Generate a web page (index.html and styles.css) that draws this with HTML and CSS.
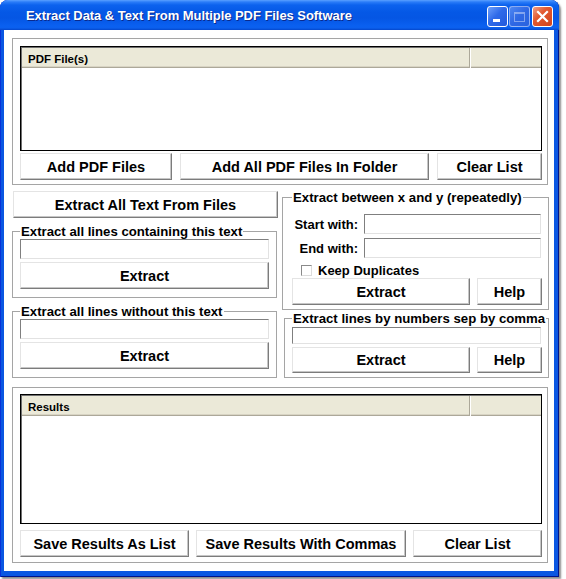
FILE: index.html
```html
<!DOCTYPE html>
<html lang="en">
<head>
<meta charset="utf-8">
<title>Extract Data &amp; Text From Multiple PDF Files Software</title>
<link rel="stylesheet" href="styles.css">
</head>
<body>
<div class="window">
  <div class="titlebar">
    <div class="title">Extract Data &amp; Text From Multiple PDF Files Software</div>
    <div class="tb-buttons">
      <span class="tb-btn tb-min"><span class="min-bar"></span></span>
      <span class="tb-btn tb-max"><span class="max-box"></span></span>
      <span class="tb-btn tb-close"><svg class="close-x" width="13" height="13" viewBox="0 0 13 13"><path d="M2 2 L11 11 M11 2 L2 11" stroke="#fff" stroke-width="2.2" stroke-linecap="square" fill="none"/></svg></span>
    </div>
  </div>
  <div class="client">
    <div class="panel panel-files">
      <div class="listview list-files">
        <div class="lv-header">
          <div class="lv-col lv-col1">PDF File(s)</div>
          <div class="lv-col lv-col2"></div>
        </div>
        <div class="lv-body"></div>
      </div>
      <div class="btn-row row-files">
        <button class="btn btn-addfiles">Add PDF Files</button>
        <button class="btn btn-addfolder">Add All PDF Files In Folder</button>
        <button class="btn btn-clear1">Clear List</button>
      </div>
    </div>

    <div class="middle">
      <div class="col-left">
        <button class="btn btn-all">Extract All Text From Files</button>
        <fieldset class="group group-left group-first">
          <legend>Extract all lines containing this text</legend>
          <div class="field field-wide"></div>
          <button class="btn btn-full">Extract</button>
        </fieldset>
        <fieldset class="group group-left group-second">
          <legend>Extract all lines without this text</legend>
          <div class="field field-wide"></div>
          <button class="btn btn-full">Extract</button>
        </fieldset>
      </div>
      <div class="col-right">
        <fieldset class="group group-between">
          <legend>Extract between x and y (repeatedly)</legend>
          <div class="form-row">
            <span class="lbl">Start with:</span>
            <div class="field field-short"></div>
          </div>
          <div class="form-row form-row-2">
            <span class="lbl">End with:</span>
            <div class="field field-short"></div>
          </div>
          <div class="check-row">
            <span class="checkbox"></span>
            <span class="check-label">Keep Duplicates</span>
          </div>
          <div class="btn-pair">
            <button class="btn btn-extract">Extract</button>
            <button class="btn btn-help">Help</button>
          </div>
        </fieldset>
        <fieldset class="group group-numbers">
          <legend>Extract lines by numbers sep by comma</legend>
          <div class="field field-num"></div>
          <div class="btn-pair btn-pair-num">
            <button class="btn btn-extract">Extract</button>
            <button class="btn btn-help">Help</button>
          </div>
        </fieldset>
      </div>
    </div>

    <div class="panel panel-results">
      <div class="listview list-results">
        <div class="lv-header">
          <div class="lv-col lv-col1">Results</div>
          <div class="lv-col lv-col2"></div>
        </div>
        <div class="lv-body"></div>
      </div>
      <div class="btn-row row-results">
        <button class="btn btn-savelist">Save Results As List</button>
        <button class="btn btn-savecommas">Save Results With Commas</button>
        <button class="btn btn-clear2">Clear List</button>
      </div>
    </div>
  </div>
</div>
</body>
</html>
```

FILE: styles.css
```css
* { box-sizing: border-box; }

html, body {
  margin: 0;
  padding: 0;
  background: #ffffff;
}

body {
  width: 566px;
  height: 579px;
  overflow: hidden;
  font-family: "Liberation Sans", Arial, sans-serif;
  font-weight: bold;
  color: #000;
}

.window {
  width: 559px;
  height: 577px;
  display: flex;
  flex-direction: column;
  background: #0a57e2;
  border-radius: 8px 8px 0 0;
  box-shadow: inset 1px 0 0 #0831d9, inset -1px 0 0 #00138c, inset 0 -1px 0 #00138c,
              2px 2px 2px rgba(0, 0, 0, 0.45);
}

/* ---------- title bar ---------- */
.titlebar {
  height: 30px;
  flex: none;
  display: flex;
  align-items: flex-start;
  padding: 0 6px 0 26px;
  border-radius: 8px 8px 0 0;
  background: linear-gradient(to bottom,
    #5aa0ff 0px, #2a7cf8 2px, #0c62ee 5px, #0558e6 12px,
    #0556e4 60%, #0a60f0 86%, #0b60ee 93%, #0447cc 100%);
}

.title {
  flex: 1;
  margin-top: 8px;
  font-size: 13px;
  line-height: 15px;
  letter-spacing: -0.05px;
  color: #ffffff;
  text-shadow: 1px 1px 0 #0b2a8c;
  white-space: nowrap;
}

.tb-buttons {
  display: flex;
  margin-top: 6px;
}

.tb-btn {
  width: 21px;
  height: 21px;
  border-radius: 3px;
  border: 1px solid #ffffff;
  position: relative;
  display: flex;
  align-items: center;
  justify-content: center;
}

.tb-min {
  background: linear-gradient(135deg, #6ea0fb 0%, #2f6ae9 45%, #2259dc 100%);
}

.min-bar {
  position: absolute;
  left: 5px;
  bottom: 4px;
  width: 7px;
  height: 3px;
  background: #ffffff;
}

.tb-max {
  margin-left: 1px;
  border-color: rgba(255, 255, 255, 0.45);
  background: linear-gradient(135deg, #4f88f2 0%, #2f68e4 50%, #2a63df 100%);
}

.max-box {
  width: 11px;
  height: 10px;
  border: 1px solid rgba(255, 255, 255, 0.4);
  border-top-width: 2px;
}

.tb-close {
  margin-left: 2px;
  background: linear-gradient(135deg, #f0a088 0%, #e2582f 40%, #d2431c 100%);
}

/* ---------- client area ---------- */
.client {
  flex: 1;
  margin: 0 5px 6px 4px;
  padding: 8px 6px 0 8px;
  background: #ffffff;
  display: flex;
  flex-direction: column;
}

.panel {
  border: 1px solid #a5a5a5;
  flex: none;
}

.panel-files {
  padding: 7px 5px 4px 7px;
}

.panel-results {
  margin-top: 9px;
  padding: 6px 5px 5px 7px;
}

/* ---------- list views ---------- */
.listview {
  border: 1px solid #000000;
  padding: 1px 0 0 1px;
  background: #ffffff;
  box-shadow: inset 1px 1px 0 #6f6f6f;
  display: flex;
  flex-direction: column;
}

.list-files { height: 105px; }
.list-results { height: 130px; }

.lv-header {
  height: 20px;
  flex: none;
  display: flex;
  background: #ebe9d8;
  box-shadow: inset 0 -1px 0 #aca899, inset 0 -2px 0 #d8d4c4;
}

.lv-col {
  font-size: 11.5px;
  line-height: 14px;
  padding: 4px 0 0 6px;
  white-space: nowrap;
}

.lv-col1 {
  width: 448px;
  border-right: 1px solid #aca899;
}

.lv-col2 {
  flex: 1;
  border-left: 1px solid #ffffff;
}

.lv-body { flex: 1; }

/* ---------- buttons ---------- */
.btn {
  display: block;
  height: 27px;
  margin: 0;
  padding: 0;
  font-family: "Liberation Sans", Arial, sans-serif;
  font-weight: bold;
  font-size: 14.5px;
  color: #000;
  background: #ffffff;
  border: 1px solid;
  border-color: #e4e4e4 #7c7c7c #7c7c7c #e4e4e4;
  box-shadow: inset -1px -1px 0 #c6c6c6;
  white-space: nowrap;
  flex: none;
}

.btn-row {
  display: flex;
}

.row-files {
  margin-top: 2px;
  gap: 8px;
}

.btn-addfiles { width: 152px; }
.btn-addfolder { width: 249px; }
.btn-clear1 { width: 105px; }

.row-results {
  margin-top: 6px;
  gap: 7px;
}

.btn-savelist { width: 169px; }
.btn-savecommas { width: 210px; }
.btn-clear2 { width: 129px; }

/* ---------- middle section ---------- */
.middle {
  margin-top: 5px;
  display: flex;
  gap: 4px;
  flex: none;
}

.col-left {
  width: 266px;
  flex: none;
  display: flex;
  flex-direction: column;
}

.col-right {
  width: 267px;
  flex: none;
  display: flex;
  flex-direction: column;
}

.btn-all {
  width: 265px;
  margin: 1px 0 0 1px;
}

.group {
  margin: 0;
  min-width: 0;
  border: 1px solid #a5a5a5;
}

.group legend {
  padding: 0 1px;
  font-size: 13.2px;
  line-height: 15px;
  white-space: nowrap;
}

.group-left {
  width: 265px;
  margin-top: 6px;
  padding: 0 7px 8px 7px;
}

.field {
  background: #ffffff;
  border: 1px solid;
  border-color: #7f7f7f #e2e2e2 #e2e2e2 #7f7f7f;
}

.field-wide {
  height: 20px;
  width: 100%;
}

.btn-full {
  width: 100%;
  margin-top: 3px;
}

.group-between {
  width: 267px;
  padding: 9px 6px 4px 9px;
}

.form-row {
  height: 20px;
  display: flex;
  align-items: center;
}

.form-row-2 { margin-top: 4px; }

.lbl {
  width: 66px;
  margin-right: 6px;
  text-align: right;
  font-size: 13px;
  white-space: nowrap;
}

.field-short {
  width: 177px;
  height: 20px;
}

.check-row {
  height: 20px;
  padding-top: 5px;
  display: flex;
  align-items: center;
}

.checkbox {
  width: 11px;
  height: 11px;
  margin-left: 9px;
  background: #ffffff;
  border: 1px solid;
  border-color: #8a8a8a #dcdcdc #dcdcdc #8a8a8a;
}

.check-label {
  margin-left: 6px;
  font-size: 13px;
}

.btn-pair {
  display: flex;
  gap: 7px;
}

.btn-extract { width: 178px; }
.btn-help { width: 65px; }

.group-numbers {
  width: 265px;
  margin: 1px 0 0 2px;
  padding: 1px 6px 4px 7px;
}

.field-num {
  width: 249px;
  height: 17px;
}

.btn-pair-num {
  margin-top: 3px;
}

.btn-pair-num .btn {
  height: 26px;
}
```
